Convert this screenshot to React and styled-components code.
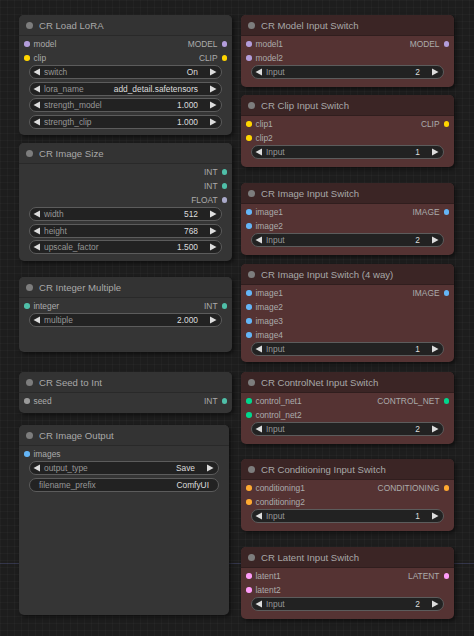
import React from "react";
import styled, { createGlobalStyle } from "styled-components";

const Global = createGlobalStyle`
  html, body { margin: 0; padding: 0; background: #1e1e1e; }
  body { font-family: "Liberation Sans", Arial, sans-serif; }
`;

const C = {
  model: "#b39ddb",
  clip: "#ffd500",
  image: "#64b5f6",
  int: "#4fbfa8",
  float: "#a9a9c9",
  grey: "#9a9a9a",
  control: "#00d78d",
  cond: "#ffa931",
  latent: "#ff9cf9",
};

const TONES = {
  grey: { title: "#333333", body: "#353535" },
  red: { title: "#3b2525", body: "#553333" },
};

const nodes = [
  {
    title: "CR Load LoRA", x: 19, y: 15, w: 213, h: 120, tone: "grey",
    slots: [
      { i: ["model", C.model], o: ["MODEL", C.model] },
      { i: ["clip", C.clip], o: ["CLIP", C.clip] },
    ],
    widgets: [
      { label: "switch", value: "On" },
      { label: "lora_name", value: "add_detail.safetensors" },
      { label: "strength_model", value: "1.000" },
      { label: "strength_clip", value: "1.000" },
    ],
  },
  {
    title: "CR Image Size", x: 19, y: 143, w: 213, h: 118, tone: "grey",
    slots: [
      { o: ["INT", C.int] },
      { o: ["INT", C.int] },
      { o: ["FLOAT", C.float] },
    ],
    widgets: [
      { label: "width", value: "512" },
      { label: "height", value: "768" },
      { label: "upscale_factor", value: "1.500" },
    ],
  },
  {
    title: "CR Integer Multiple", x: 19, y: 277, w: 213, h: 75, tone: "grey",
    slots: [{ i: ["integer", C.int], o: ["INT", C.int] }],
    widgets: [{ label: "multiple", value: "2.000" }],
  },
  {
    title: "CR Seed to Int", x: 19, y: 372, w: 213, h: 41, tone: "grey",
    slots: [{ i: ["seed", C.grey], o: ["INT", C.int] }],
    widgets: [],
  },
  {
    title: "CR Image Output", x: 19, y: 425, w: 210, h: 190, tone: "grey",
    slots: [{ i: ["images", C.image] }],
    widgets: [
      { label: "output_type", value: "Save" },
      { label: "filename_prefix", value: "ComfyUI", text: true },
    ],
  },
  {
    title: "CR Model Input Switch", x: 241, y: 15, w: 213, h: 72, tone: "red",
    slots: [
      { i: ["model1", C.model], o: ["MODEL", C.model] },
      { i: ["model2", C.model] },
    ],
    widgets: [{ label: "Input", value: "2" }],
  },
  {
    title: "CR Clip Input Switch", x: 241, y: 95, w: 213, h: 72, tone: "red",
    slots: [
      { i: ["clip1", C.clip], o: ["CLIP", C.clip] },
      { i: ["clip2", C.clip] },
    ],
    widgets: [{ label: "Input", value: "1" }],
  },
  {
    title: "CR Image Input Switch", x: 241, y: 183, w: 213, h: 72, tone: "red",
    slots: [
      { i: ["image1", C.image], o: ["IMAGE", C.image] },
      { i: ["image2", C.image] },
    ],
    widgets: [{ label: "Input", value: "2" }],
  },
  {
    title: "CR Image Input Switch (4 way)", x: 241, y: 264, w: 213, h: 98, tone: "red",
    slots: [
      { i: ["image1", C.image], o: ["IMAGE", C.image] },
      { i: ["image2", C.image] },
      { i: ["image3", C.image] },
      { i: ["image4", C.image] },
    ],
    widgets: [{ label: "Input", value: "1" }],
  },
  {
    title: "CR ControlNet Input Switch", x: 241, y: 372, w: 213, h: 72, tone: "red",
    slots: [
      { i: ["control_net1", C.control], o: ["CONTROL_NET", C.control] },
      { i: ["control_net2", C.control] },
    ],
    widgets: [{ label: "Input", value: "2" }],
  },
  {
    title: "CR Conditioning Input Switch", x: 241, y: 459, w: 213, h: 72, tone: "red",
    slots: [
      { i: ["conditioning1", C.cond], o: ["CONDITIONING", C.cond] },
      { i: ["conditioning2", C.cond] },
    ],
    widgets: [{ label: "Input", value: "1" }],
  },
  {
    title: "CR Latent Input Switch", x: 241, y: 547, w: 213, h: 72, tone: "red",
    slots: [
      { i: ["latent1", C.latent], o: ["LATENT", C.latent] },
      { i: ["latent2", C.latent] },
    ],
    widgets: [{ label: "Input", value: "2" }],
  },
];

const Canvas = styled.div`
  position: relative;
  width: 474px;
  height: 636px;
  overflow: hidden;
  background-color: #1d1d1d;
  background-image:
    linear-gradient(to right, rgba(255, 255, 255, 0.025) 1px, transparent 1px),
    linear-gradient(to bottom, rgba(255, 255, 255, 0.025) 1px, transparent 1px);
  background-size: 7px 7px;
`;

const LinkLine = styled.div`
  position: absolute;
  left: 0;
  right: 0;
  top: 563px;
  height: 1px;
  background: rgba(110, 120, 190, 0.28);
`;

const Node = styled.div`
  position: absolute;
  left: ${(p) => p.$x}px;
  top: ${(p) => p.$y}px;
  width: ${(p) => p.$w}px;
  height: ${(p) => p.$h}px;
  display: flex;
  flex-direction: column;
  border-radius: 5px;
  overflow: hidden;
  background: ${(p) => TONES[p.$tone].body};
  box-shadow: 2px 2px 4px rgba(0, 0, 0, 0.55);
`;

const Title = styled.div`
  height: 21px;
  flex: none;
  display: flex;
  align-items: center;
  gap: 6px;
  padding-left: 7px;
  background: ${(p) => TONES[p.$tone].title};
  border-bottom: 1px solid rgba(0, 0, 0, 0.18);
  box-sizing: border-box;
  color: #a8a8a8;
  font-size: 9.6px;
  white-space: nowrap;
`;

const TitleDot = styled.span`
  width: 7px;
  height: 7px;
  border-radius: 50%;
  background: #7d7d7d;
  flex: none;
`;

const Body = styled.div`
  display: flex;
  flex-direction: column;
  padding-top: 1px;
`;

const SlotRow = styled.div`
  height: 14px;
  display: flex;
  align-items: center;
  justify-content: space-between;
  padding: 0 5px 0 5px;
  font-size: 8.4px;
  color: #ababab;
`;

const Slot = styled.span`
  display: flex;
  align-items: center;
  gap: 4px;
  margin-left: ${(p) => (p.$out ? "auto" : "0")};
`;

const Dot = styled.span`
  width: 5.5px;
  height: 5.5px;
  border-radius: 50%;
  background: ${(p) => p.$c};
  flex: none;
`;

const Widgets = styled.div`
  display: flex;
  flex-direction: column;
  gap: 2.5px;
  padding: 0 10px;
`;

const Widget = styled.div`
  height: 14px;
  box-sizing: border-box;
  display: flex;
  align-items: center;
  border: 1px solid #5c5c5c;
  border-radius: 7px;
  background: #222222;
  font-size: 8.4px;
  padding: ${(p) => (p.$text ? "0 9px" : "0 4px 0 3px")};
`;

const WLabel = styled.span`
  color: #979797;
  flex: 1;
  margin-left: ${(p) => (p.$text ? "0" : "3px")};
  white-space: nowrap;
`;

const WValue = styled.span`
  color: #dddddd;
  white-space: nowrap;
  margin-right: ${(p) => (p.$text ? "0" : "11px")};
`;

const Arrow = styled.svg`
  width: 8px;
  height: 8px;
  flex: none;
  display: block;
`;

function Left() {
  return (
    <Arrow viewBox="0 0 8 8">
      <polygon points="7,0.5 7,7.5 0.5,4" fill="#dddddd" />
    </Arrow>
  );
}

function Right() {
  return (
    <Arrow viewBox="0 0 8 8">
      <polygon points="1,0.5 1,7.5 7.5,4" fill="#dddddd" />
    </Arrow>
  );
}

function GraphNode({ n }) {
  return (
    <Node $x={n.x} $y={n.y} $w={n.w} $h={n.h} $tone={n.tone}>
      <Title $tone={n.tone}>
        <TitleDot />
        {n.title}
      </Title>
      <Body>
        {n.slots.map((s, k) => (
          <SlotRow key={k}>
            {s.i && (
              <Slot>
                <Dot $c={s.i[1]} />
                {s.i[0]}
              </Slot>
            )}
            {s.o && (
              <Slot $out>
                {s.o[0]}
                <Dot $c={s.o[1]} />
              </Slot>
            )}
          </SlotRow>
        ))}
        {n.widgets.length > 0 && (
          <Widgets>
            {n.widgets.map((w, k) => (
              <Widget key={k} $text={w.text}>
                {!w.text && <Left />}
                <WLabel $text={w.text}>{w.label}</WLabel>
                <WValue $text={w.text}>{w.value}</WValue>
                {!w.text && <Right />}
              </Widget>
            ))}
          </Widgets>
        )}
      </Body>
    </Node>
  );
}

export default function App() {
  return (
    <>
      <Global />
      <Canvas>
        <LinkLine />
        {nodes.map((n, k) => (
          <GraphNode key={k} n={n} />
        ))}
      </Canvas>
    </>
  );
}
